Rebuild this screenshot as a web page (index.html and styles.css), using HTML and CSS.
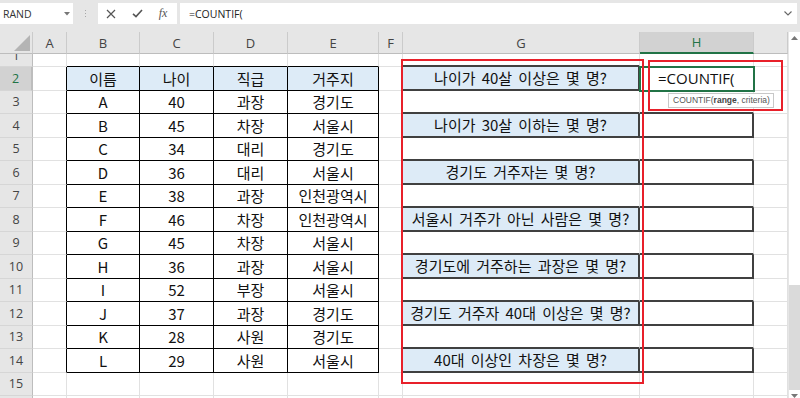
FILE: index.html
```html
<!DOCTYPE html>
<html lang="ko">
<head>
<meta charset="utf-8">
<title>COUNTIF</title>
<link rel="stylesheet" href="styles.css">
</head>
<body>
<div class="toolbar">
  <div class="namebox"><span>RAND</span><svg class="dd" width="6" height="4" viewBox="0 0 6 4"><path d="M0 0H6L3 3.5Z" fill="#777"/></svg></div>
  <div class="sep"><span class="dots"><i></i><i></i><i></i></span></div>
  <div class="icons">
    <span class="ico"><svg width="10" height="10" viewBox="0 0 10 10"><path d="M1 1L9 9M9 1L1 9" stroke="#555" stroke-width="1.2" fill="none"/></svg></span>
    <span class="ico"><svg width="11" height="9" viewBox="0 0 11 9"><path d="M1 4.8L4 7.6L10 1" stroke="#555" stroke-width="1.6" fill="none"/></svg></span>
    <span class="ico fx">fx</span>
  </div>
  <div class="fbar"><span>=COUNTIF(</span><svg width="8" height="5" viewBox="0 0 8 5"><path d="M0.5 0.5L4 4L7.5 0.5" stroke="#666" stroke-width="1.1" fill="none"/></svg></div>
</div>
<div class="sheet">
  <table class="grid">
    <colgroup>
      <col class="c-rh"><col class="c-a"><col class="c-b"><col class="c-c"><col class="c-d"><col class="c-e"><col class="c-f"><col class="c-g"><col class="c-h"><col class="c-i">
    </colgroup>
    <tr class="hdr"><th class="corner"><span class="tri"></span></th><th>A</th><th>B</th><th>C</th><th>D</th><th>E</th><th>F</th><th>G</th><th class="sel">H</th><th></th></tr>
    <tr class="r1"><th class="rh"><div class="cut">1</div></th><td></td><td class="ab"></td><td class="ab"></td><td class="ab"></td><td class="ab"></td><td></td><td class="ga"></td><td></td><td></td></tr>
    <tr class="r"><th class="rh sel">2</th><td class="lb"></td><td class="t th">이름</td><td class="t th">나이</td><td class="t th">직급</td><td class="t th">거주지</td><td class="gl"></td><td class="q">나이가 40살 이상은 몇 명?</td><td class="act">=COUNTIF(</td><td></td></tr>
    <tr class="r"><th class="rh">3</th><td class="lb"></td><td class="t">A</td><td class="t">40</td><td class="t">과장</td><td class="t">경기도</td><td></td><td class="ga"></td><td class="ga"></td><td></td></tr>
    <tr class="r"><th class="rh">4</th><td class="lb"></td><td class="t">B</td><td class="t">45</td><td class="t">차장</td><td class="t">서울시</td><td class="gl"></td><td class="q">나이가 30살 이하는 몇 명?</td><td class="hb"></td><td></td></tr>
    <tr class="r"><th class="rh">5</th><td class="lb"></td><td class="t">C</td><td class="t">34</td><td class="t">대리</td><td class="t">경기도</td><td></td><td class="ga"></td><td class="ga"></td><td></td></tr>
    <tr class="r"><th class="rh">6</th><td class="lb"></td><td class="t">D</td><td class="t">36</td><td class="t">대리</td><td class="t">서울시</td><td class="gl"></td><td class="q">경기도 거주자는 몇 명?</td><td class="hb"></td><td></td></tr>
    <tr class="r"><th class="rh">7</th><td class="lb"></td><td class="t">E</td><td class="t">38</td><td class="t">과장</td><td class="t">인천광역시</td><td></td><td class="ga"></td><td class="ga"></td><td></td></tr>
    <tr class="r"><th class="rh">8</th><td class="lb"></td><td class="t">F</td><td class="t">46</td><td class="t">차장</td><td class="t">인천광역시</td><td class="gl"></td><td class="q">서울시 거주가 아닌 사람은 몇 명?</td><td class="hb"></td><td></td></tr>
    <tr class="r"><th class="rh">9</th><td class="lb"></td><td class="t">G</td><td class="t">45</td><td class="t">차장</td><td class="t">서울시</td><td></td><td class="ga"></td><td class="ga"></td><td></td></tr>
    <tr class="r"><th class="rh">10</th><td class="lb"></td><td class="t">H</td><td class="t">36</td><td class="t">과장</td><td class="t">서울시</td><td class="gl"></td><td class="q">경기도에 거주하는 과장은 몇 명?</td><td class="hb"></td><td></td></tr>
    <tr class="r"><th class="rh">11</th><td class="lb"></td><td class="t">I</td><td class="t">52</td><td class="t">부장</td><td class="t">서울시</td><td></td><td class="ga"></td><td class="ga"></td><td></td></tr>
    <tr class="r"><th class="rh">12</th><td class="lb"></td><td class="t">J</td><td class="t">37</td><td class="t">과장</td><td class="t">경기도</td><td class="gl"></td><td class="q">경기도 거주자 40대 이상은 몇 명?</td><td class="hb"></td><td></td></tr>
    <tr class="r"><th class="rh">13</th><td class="lb"></td><td class="t">K</td><td class="t">28</td><td class="t">사원</td><td class="t">경기도</td><td></td><td class="ga"></td><td class="ga"></td><td></td></tr>
    <tr class="r"><th class="rh">14</th><td class="lb"></td><td class="t">L</td><td class="t">29</td><td class="t">사원</td><td class="t">서울시</td><td class="gl"></td><td class="q">40대 이상인 차장은 몇 명?</td><td class="hb"></td><td></td></tr>
    <tr class="r"><th class="rh">15</th><td></td><td></td><td></td><td></td><td></td><td></td><td></td><td></td><td></td></tr>
    <tr class="r"><th class="rh"></th><td></td><td></td><td></td><td></td><td></td><td></td><td></td><td></td><td></td></tr>
  </table>
  <div class="vscroll">
    <div class="arrow"><svg width="7" height="4" viewBox="0 0 7 4"><path d="M0 4H7L3.5 0Z" fill="#777"/></svg></div>
    <div class="thumb"></div>
    <div class="arrow down"><svg width="7" height="4" viewBox="0 0 7 4"><path d="M0 0H7L3.5 4Z" fill="#777"/></svg></div>
  </div>
  <div class="activecell"></div>
  <div class="tip">COUNTIF(<b>range</b>, criteria)</div>
  <div class="redbox r-g"></div>
  <div class="redbox r-h"></div>
</div>
</body>
</html>
```

FILE: styles.css
```css
* { box-sizing: border-box; }
html, body { margin: 0; padding: 0; }
body {
  width: 800px;
  height: 398px;
  overflow: hidden;
  background: #fff;
  font-family: "Open Sans", "Noto Sans", sans-serif;
}

/* formula toolbar */
.toolbar {
  display: flex;
  align-items: flex-start;
  height: 32px;
  padding-top: 3px;
  background: #e6e6e6;
}
.namebox {
  width: 73px;
  height: 21px;
  background: #fff;
  display: flex;
  align-items: center;
  justify-content: space-between;
  padding: 0 3px 0 3px;
  font-size: 10.5px;
  color: #333;
}
.sep {
  width: 25px;
  height: 21px;
  display: flex;
  align-items: center;
  justify-content: center;
}
.dots { display: flex; flex-direction: column; gap: 2px; }
.dots i { display: block; width: 1px; height: 1px; background: #a8a8a8; }
.icons {
  width: 79px;
  height: 21px;
  background: #fff;
  display: flex;
  align-items: center;
}
.ico {
  width: 26px;
  display: flex;
  align-items: center;
  justify-content: center;
}
.fx {
  font-family: "Liberation Serif", serif;
  font-style: italic;
  font-size: 12px;
  color: #555;
}
.fbar {
  margin-left: 3px;
  width: 617px;
  height: 21px;
  background: #fff;
  display: flex;
  align-items: center;
  justify-content: space-between;
  padding: 0 5px 0 9px;
  font-size: 10.5px;
  color: #222;
}

/* sheet */
.sheet {
  position: relative;
  display: flex;
  align-items: flex-start;
  height: 366px;
  overflow: hidden;
}
.grid {
  border-collapse: separate;
  border-spacing: 0;
  table-layout: fixed;
  width: 788px;
  flex: none;
}
.c-rh { width: 33px; }
.c-a { width: 34px; }
.c-b { width: 73px; }
.c-c { width: 74px; }
.c-d { width: 74px; }
.c-e { width: 91px; }
.c-f { width: 24px; }
.c-g { width: 237px; }
.c-h { width: 114px; }
.c-i { width: 34px; }

.grid td, .grid th {
  padding: 0;
  border-right: 1px solid #e1e1e1;
  border-bottom: 1px solid #e1e1e1;
  text-align: center;
  vertical-align: middle;
  white-space: nowrap;
  overflow: hidden;
}
.grid td {
  font-family: "Noto Sans CJK KR", sans-serif;
  font-size: 15px;
  line-height: 1;
  color: #111;
}
.hdr { height: 22px; }
.r1 { height: 13px; }
.r { height: 23.5px; }

.hdr th {
  background: #e6e6e6;
  font-weight: normal;
  font-size: 13px;
  color: #444;
  border-right-color: #cbcbcb;
  border-bottom-color: #bdbdbd;
}
.hdr th.sel {
  background: #d2d2d2;
  color: #217346;
  border-bottom: 2px solid #217346;
}
.corner {
  vertical-align: bottom !important;
  text-align: right !important;
  font-size: 0;
  line-height: 0;
  padding: 0 2px 2px 0 !important;
}
.tri {
  display: inline-block;
  width: 0;
  height: 0;
  border-left: 16px solid transparent;
  border-bottom: 16px solid #b4b4b4;
}
.rh {
  background: #e6e6e6;
  font-weight: normal;
  font-size: 12.5px;
  color: #444;
  border-right-color: #bdbdbd !important;
  border-bottom-color: #d6d6d6 !important;
}
.rh.sel {
  background: #d2d2d2;
  color: #217346;
  border-right: 2px solid #217346;
}
.cut {
  height: 12px;
  overflow: hidden;
  line-height: 4px;
}

/* data table */
.lb { border-right-color: #000 !important; }
.ab { border-bottom-color: #000 !important; }
.t { border-right-color: #000 !important; border-bottom-color: #000 !important; }
.th { background: #ddebf7; }

/* question boxes */
.gl { border-right: 2px solid #404040 !important; }
.ga { border-bottom: 2px solid #404040 !important; }
.q {
  background: #ddebf7;
  border-right: 2px solid #404040 !important;
  border-bottom: 2px solid #404040 !important;
  word-spacing: 2px;
}
.hb {
  border-right: 2px solid #404040 !important;
  border-bottom: 2px solid #404040 !important;
}
.grid td.act {
  text-align: left;
  padding-left: 18px;
  font-family: "Open Sans", sans-serif;
  font-size: 15px;
}

/* scrollbar */
.vscroll {
  flex: none;
  width: 12px;
  height: 366px;
  display: flex;
  flex-direction: column;
  align-items: center;
  background: #fff;
  border-left: 1px solid #e6e6e6;
}
.arrow {
  height: 12px;
  width: 100%;
  display: flex;
  align-items: center;
  justify-content: center;
}
.arrow.down { height: 8px; align-items: flex-end; }
.thumb {
  margin-top: auto;
  width: 11px;
  height: 105px;
  background: #dadada;
}

/* overlays */
.activecell {
  position: absolute;
  left: 639px;
  top: 34px;
  width: 116px;
  height: 26px;
  border: 2px solid #217346;
}
.tip {
  position: absolute;
  left: 668px;
  top: 61px;
  width: 106px;
  height: 15px;
  background: #fff;
  border: 1px solid #c8c8c8;
  padding-left: 4px;
  font-family: "Liberation Sans", sans-serif;
  font-size: 8.5px;
  line-height: 13px;
  color: #555;
  white-space: nowrap;
}
.tip b { color: #444; }
.redbox {
  position: absolute;
  border: 2px solid #e8202a;
}
.r-g { left: 401px; top: 27px; width: 243px; height: 325px; }
.r-h { left: 648px; top: 28px; width: 135px; height: 51px; }
```
